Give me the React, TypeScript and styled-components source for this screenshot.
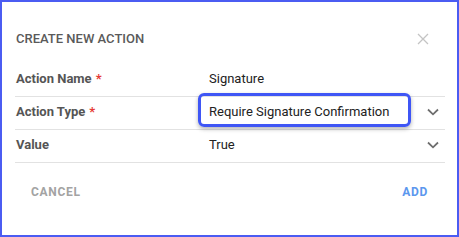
import React from 'react';
import styled, { createGlobalStyle } from 'styled-components';

const GlobalStyle = createGlobalStyle`
  html, body {
    margin: 0;
    padding: 0;
    background: #ffffff;
  }
  body {
    font-family: Roboto, "Liberation Sans", Arial, sans-serif;
  }
`;

const Dialog = styled.div`
  box-sizing: border-box;
  width: 459px;
  height: 237px;
  border: 2px solid #4b5cf2;
  background: #ffffff;
  display: flex;
  flex-direction: column;
`;

const Header = styled.div`
  display: flex;
  align-items: center;
  justify-content: space-between;
  padding: 28px 27px 0 14px;
  margin-bottom: 15px;
`;

const Title = styled.div`
  font-size: 13px;
  line-height: 18px;
  font-weight: 500;
  color: #5a5a5a;
`;

const CloseButton = styled.button`
  border: none;
  background: none;
  padding: 0;
  width: 14px;
  height: 14px;
  display: flex;
  align-items: center;
  justify-content: center;
  cursor: pointer;
`;

const Fields = styled.div`
  display: flex;
  flex-direction: column;
  padding: 0 12px 0 13px;
`;

const Row = styled.div`
  display: grid;
  grid-template-columns: 183px 1fr 25px;
  align-items: center;
  height: 32px;
  border-bottom: 1px solid #e2e2e2;
  padding-bottom: 1px;
  box-sizing: content-box;
  & + & {
    height: 31px;
  }
`;

const Label = styled.div`
  font-size: 13px;
  font-weight: 700;
  color: #555555;
  padding-left: 1px;
  padding-bottom: 2px;
`;

const Required = styled.span`
  color: #e53935;
  margin-left: 4px;
`;

const Value = styled.div`
  position: relative;
  font-size: 13px;
  color: #222222;
  padding-left: 11px;
  padding-bottom: 2px;
  height: 100%;
  display: flex;
  align-items: center;
`;

const Highlight = styled.div`
  position: absolute;
  top: -3px;
  left: 0;
  width: 213px;
  height: 34px;
  box-sizing: border-box;
  border: 3px solid #3f56f5;
  border-radius: 6px;
  box-shadow: 0 2px 4px rgba(0, 0, 0, 0.3);
  pointer-events: none;
`;

const Chevron = styled.div`
  display: flex;
  align-items: center;
  justify-content: center;
  padding-bottom: 2px;
`;

const Footer = styled.div`
  display: flex;
  justify-content: space-between;
  align-items: center;
  padding: 0 13px;
  margin-top: 11px;
`;

const TextButton = styled.button<{ $primary?: boolean }>`
  border: none;
  background: none;
  height: 36px;
  padding: 0 16px;
  font-family: Roboto, "Liberation Sans", Arial, sans-serif;
  font-size: 12px;
  font-weight: 700;
  letter-spacing: 0.7px;
  color: ${(p) => (p.$primary ? '#5b97ee' : '#a3a3a3')};
  cursor: pointer;
`;

function ChevronIcon() {
  return (
    <svg width="12" height="8" viewBox="0 0 12 8">
      <path d="M1 1.5 L6 6.3 L11 1.5" fill="none" stroke="#6e6e6e" strokeWidth="1.8" />
    </svg>
  );
}

interface Field {
  label: string;
  value: string;
  required?: boolean;
  select?: boolean;
  highlighted?: boolean;
}

const fields: Field[] = [
  { label: 'Action Name', value: 'Signature', required: true },
  { label: 'Action Type', value: 'Require Signature Confirmation', required: true, select: true, highlighted: true },
  { label: 'Value', value: 'True', select: true },
];

export default function App() {
  return (
    <>
      <GlobalStyle />
      <Dialog>
        <Header>
          <Title>CREATE NEW ACTION</Title>
          <CloseButton aria-label="close">
            <svg width="12" height="12" viewBox="0 0 12 12">
              <path d="M1 1 L11 11 M11 1 L1 11" stroke="#c4c4c4" strokeWidth="1.3" fill="none" />
            </svg>
          </CloseButton>
        </Header>
        <Fields>
          {fields.map((f) => (
            <Row key={f.label}>
              <Label>
                {f.label}
                {f.required && <Required>*</Required>}
              </Label>
              <Value>
                {f.value}
                {f.highlighted && <Highlight />}
              </Value>
              <Chevron>{f.select && <ChevronIcon />}</Chevron>
            </Row>
          ))}
        </Fields>
        <Footer>
          <TextButton>CANCEL</TextButton>
          <TextButton $primary>ADD</TextButton>
        </Footer>
      </Dialog>
    </>
  );
}
